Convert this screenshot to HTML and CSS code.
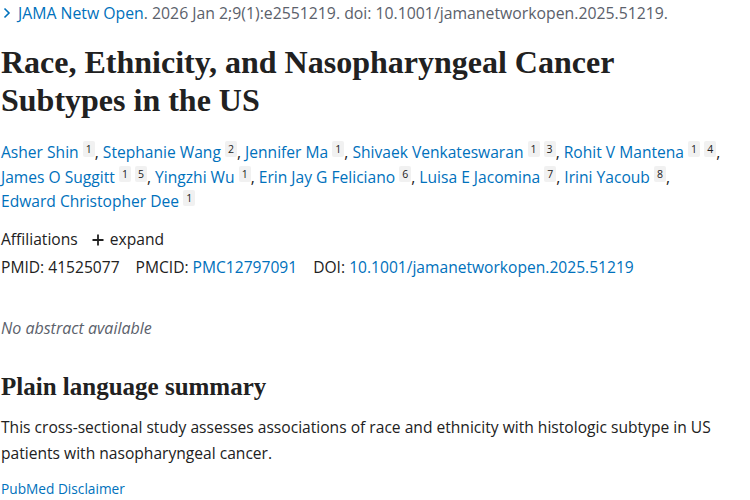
FILE: index.html
```html
<!DOCTYPE html>
<html lang="en">
<head>
<meta charset="utf-8">
<title>Race, Ethnicity, and Nasopharyngeal Cancer Subtypes in the US</title>
<link rel="stylesheet" href="styles.css">
</head>
<body>
<main class="article">
  <div class="citation">
    <svg class="chev" width="8" height="12" viewBox="0 0 8 12" aria-hidden="true"><path d="M1.5 1.5 L6 6 L1.5 10.5" fill="none" stroke="#0071bc" stroke-width="1.6"/></svg>
    <span><a class="link" href="#">JAMA Netw Open</a>. 2026 Jan 2;9(1):e2551219. doi: 10.1001/jamanetworkopen.2025.51219.</span>
  </div>
  <h1 class="title">Race, Ethnicity, and Nasopharyngeal Cancer Subtypes in the US</h1>
  <div class="authors">
    <span class="author"><a class="link" href="#">Asher Shin</a> <sup class="aff">1</sup>,</span> <span class="author"><a class="link" href="#">Stephanie Wang</a> <sup class="aff">2</sup>,</span> <span class="author"><a class="link" href="#">Jennifer Ma</a> <sup class="aff">1</sup>,</span> <span class="author"><a class="link" href="#">Shivaek Venkateswaran</a> <sup class="aff">1</sup> <sup class="aff">3</sup>,</span> <span class="author"><a class="link" href="#">Rohit V Mantena</a> <sup class="aff">1</sup> <sup class="aff">4</sup>,</span> <span class="author"><a class="link" href="#">James O Suggitt</a> <sup class="aff">1</sup> <sup class="aff">5</sup>,</span> <span class="author"><a class="link" href="#">Yingzhi Wu</a> <sup class="aff">1</sup>,</span> <span class="author"><a class="link" href="#">Erin Jay G Feliciano</a> <sup class="aff">6</sup>,</span> <span class="author"><a class="link" href="#">Luisa E Jacomina</a> <sup class="aff">7</sup>,</span> <span class="author"><a class="link" href="#">Irini Yacoub</a> <sup class="aff">8</sup>,</span> <span class="author"><a class="link" href="#">Edward Christopher Dee</a> <sup class="aff">1</sup></span>
  </div>
  <div class="affiliations">Affiliations <span class="expand"><svg class="plus" width="12" height="12" viewBox="0 0 12 12" aria-hidden="true"><path d="M6 0.5 V11.5 M0.5 6 H11.5" stroke="#212121" stroke-width="1.8"/></svg> expand</span></div>
  <div class="ids">
    <span class="id">PMID: 41525077</span>
    <span class="id">PMCID: <a class="link" href="#">PMC12797091</a></span>
    <span class="id">DOI: <a class="link" href="#">10.1001/jamanetworkopen.2025.51219</a></span>
  </div>
  <p class="noabs">No abstract available</p>
  <h2 class="subhead">Plain language summary</h2>
  <p class="summary">This cross-sectional study assesses associations of race and ethnicity with histologic subtype in US patients with nasopharyngeal cancer.</p>
  <a class="link disclaimer" href="#">PubMed Disclaimer</a>
</main>
</body>
</html>
```
FILE: styles.css
```css
html, body {
  margin: 0;
  padding: 0;
  background: #ffffff;
}
body {
  font-family: "Open Sans", "Noto Sans", sans-serif;
  color: #212121;
  font-size: 15.6px;
}
.article {
  padding: 0 0 0 1px;
}
.link {
  color: #0071bc;
  text-decoration: none;
}
.citation {
  color: #5b616b;
  font-size: 15.8px;
  line-height: 26px;
  display: flex;
  align-items: center;
  white-space: nowrap;
}
.citation .chev {
  margin: 0 7px 0 2px;
}
.title {
  font-family: "Liberation Serif", serif;
  font-weight: bold;
  font-size: 32px;
  line-height: 38px;
  margin: 17px 0 21px;
  color: #212121;
  max-width: 660px;
}
.authors {
  line-height: 24.5px;
  color: #212121;
  max-width: 740px;
}
.author {
  white-space: nowrap;
}
.aff {
  font-size: 10.5px;
  line-height: 1;
  background: #f1f1f1;
  color: #212121;
  padding: 1px 3px;
  border-radius: 2px;
  vertical-align: 5px;
}
.affiliations {
  margin-top: 11px;
  line-height: 28px;
}
.expand {
  margin-left: 10px;
}
.plus {
  vertical-align: -1px;
  margin-right: 2px;
}
.ids {
  line-height: 28px;
  display: flex;
  gap: 16px;
}
.noabs {
  font-style: italic;
  font-size: 16px;
  color: #5b616b;
  margin: 34px 0 0;
  line-height: 26px;
}
.subhead {
  font-family: "Liberation Serif", serif;
  font-weight: bold;
  font-size: 25px;
  line-height: 30px;
  margin: 31px 0 12px;
}
.summary {
  margin: 0;
  line-height: 26px;
}
.disclaimer {
  display: block;
  font-size: 13.7px;
  margin-top: 12px;
  line-height: 22px;
}
```
